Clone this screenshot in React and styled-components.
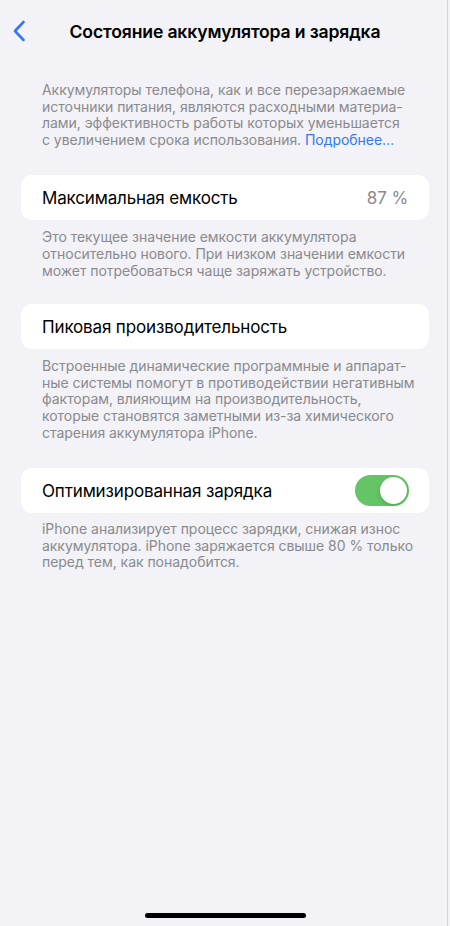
import React, { useState } from "react";
import styled, { createGlobalStyle } from "styled-components";

const GlobalStyle = createGlobalStyle`
  html, body {
    margin: 0;
    padding: 0;
    background: #f2f2f7;
  }
  body {
    font-family: Inter, "Noto Sans", "Liberation Sans", sans-serif;
    -webkit-font-smoothing: antialiased;
  }
`;

// thin grey edge line near the right side of the screen
const Screen = styled.div`
  width: 450px;
  min-height: 926px;
  display: flex;
  flex-direction: column;
  background:
    linear-gradient(
      to right,
      transparent 447px,
      #d4d4d8 447px,
      #d4d4d8 448px,
      transparent 448px
    ),
    #f2f2f7;
`;

const NavBar = styled.div`
  height: 62px;
  display: grid;
  grid-template-columns: 48px 1fr 48px;
  align-items: center;
`;

const BackButton = styled.button`
  border: 0;
  background: none;
  padding: 0 0 0 12px;
  height: 40px;
  display: flex;
  align-items: center;
  cursor: pointer;
`;

const Title = styled.h1`
  margin: 0;
  text-align: center;
  font-size: 17.6px;
  font-weight: 600;
  letter-spacing: -0.15px;
  color: #000;
  white-space: nowrap;
`;

const Footnote = styled.p`
  margin: ${(p) => p.$top || 0}px 0 0;
  padding: 0 20px 0 42px;
  font-size: 14px;
  line-height: 16.6px;
  color: #8a8a8e;
  letter-spacing: -0.04px;
  white-space: nowrap;
`;

const Link = styled.a`
  color: #3478f6;
  text-decoration: none;
`;

const Card = styled.div`
  margin: ${(p) => p.$top || 0}px 21px 0;
  height: 45px;
  background: #fff;
  border-radius: 11px;
  display: flex;
  align-items: center;
  justify-content: space-between;
  padding: 0 21px;
  box-sizing: border-box;
`;

const Label = styled.span`
  font-size: 17px;
  letter-spacing: -0.15px;
  color: #000;
`;

const Value = styled.span`
  font-size: 17px;
  letter-spacing: -0.1px;
  color: #8a8a8e;
`;

const Toggle = styled.button`
  width: 54px;
  height: 31px;
  border: 0;
  padding: 2px;
  border-radius: 16px;
  background: ${(p) => (p.$on ? "#65c466" : "#e9e9ea")};
  display: flex;
  justify-content: ${(p) => (p.$on ? "flex-end" : "flex-start")};
  align-items: center;
  margin-right: -1px;
  cursor: pointer;
`;

const Knob = styled.span`
  width: 27px;
  height: 27px;
  border-radius: 50%;
  background: #fff;
  box-shadow: 0 2px 5px rgba(0, 0, 0, 0.15), 0 0 1px rgba(0, 0, 0, 0.12);
`;

const HomeIndicator = styled.div`
  margin: auto auto 8px;
  width: 161px;
  height: 5px;
  border-radius: 3px;
  background: #000;
`;

export default function App() {
  const [optimized, setOptimized] = useState(true);

  return (
    <>
      <GlobalStyle />
      <Screen>
        <NavBar>
          <BackButton aria-label="Назад">
            <svg width="14" height="22" viewBox="0 0 14 22" fill="none">
              <path
                d="M11.5 2 L3 11 L11.5 20"
                stroke="#3478f6"
                strokeWidth="2.6"
                strokeLinecap="round"
                strokeLinejoin="round"
              />
            </svg>
          </BackButton>
          <Title>Состояние аккумулятора и зарядка</Title>
          <span />
        </NavBar>

        <Footnote $top={20}>
          Аккумуляторы телефона, как и все перезаряжаемые
          <br />
          источники питания, являются расходными материа-
          <br />
          лами, эффективность работы которых уменьшается
          <br />
          с увеличением срока использования. <Link href="#">Подробнее…</Link>
        </Footnote>

        <Card $top={27}>
          <Label>Максимальная емкость</Label>
          <Value>87 %</Value>
        </Card>
        <Footnote $top={9}>
          Это текущее значение емкости аккумулятора
          <br />
          относительно нового. При низком значении емкости
          <br />
          может потребоваться чаще заряжать устройство.
        </Footnote>

        <Card $top={25}>
          <Label>Пиковая производительность</Label>
        </Card>
        <Footnote $top={9}>
          Встроенные динамические программные и аппарат-
          <br />
          ные системы помогут в противодействии негативным
          <br />
          факторам, влияющим на производительность,
          <br />
          которые становятся заметными из-за химического
          <br />
          старения аккумулятора iPhone.
        </Footnote>

        <Card $top={27}>
          <Label>Оптимизированная зарядка</Label>
          <Toggle
            $on={optimized}
            aria-pressed={optimized}
            onClick={() => setOptimized(!optimized)}
          >
            <Knob />
          </Toggle>
        </Card>
        <Footnote $top={8}>
          iPhone анализирует процесс зарядки, снижая износ
          <br />
          аккумулятора. iPhone заряжается свыше 80 % только
          <br />
          перед тем, как понадобится.
        </Footnote>

        <HomeIndicator />
      </Screen>
    </>
  );
}
